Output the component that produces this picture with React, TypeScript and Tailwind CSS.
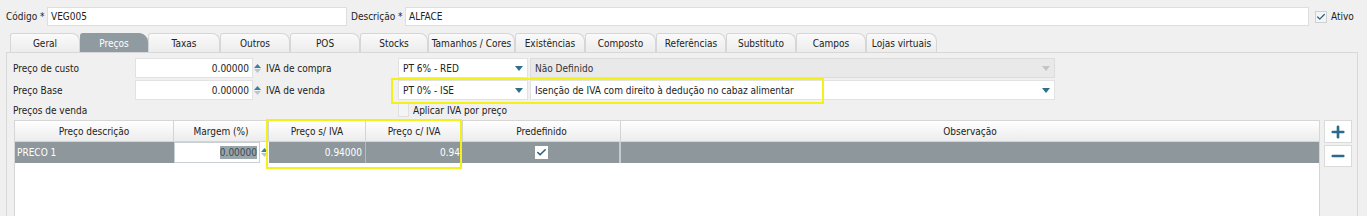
import { Check, Plus, Minus } from 'lucide-react';

const tabs = [
  { label: 'Geral', w: 70 },
  { label: 'Preços', w: 68 },
  { label: 'Taxas', w: 72 },
  { label: 'Outros', w: 70 },
  { label: 'POS', w: 70 },
  { label: 'Stocks', w: 68 },
  { label: 'Tamanhos / Cores', w: 87 },
  { label: 'Existências', w: 70 },
  { label: 'Composto', w: 71 },
  { label: 'Referências', w: 70 },
  { label: 'Substituto', w: 70 },
  { label: 'Campos', w: 70 },
  { label: 'Lojas virtuais', w: 71 },
];

function Spin() {
  return (
    <div className="flex flex-col items-center justify-center w-[9px] h-full gap-[1px]">
      <svg width="7" height="4" viewBox="0 0 7 4"><path d="M0 4 L3.5 0 L7 4 Z" fill="#3d7f9c" /></svg>
      <svg width="7" height="4" viewBox="0 0 7 4"><path d="M0 0 L3.5 4 L7 0 Z" fill="#b9c6cc" /></svg>
    </div>
  );
}

function Caret({ color = '#2f6f8c' }: { color?: string }) {
  return (
    <svg width="8" height="5" viewBox="0 0 8 5"><path d="M0 0 L8 0 L4 5 Z" fill={color} /></svg>
  );
}

export default function App() {
  return (
    <div className="relative w-[1367px] h-[216px] overflow-hidden bg-[#f0f0f0] text-[10px] text-[#222] font-['DejaVu_Sans_Condensed','DejaVu_Sans',sans-serif]">
      {/* Top row */}
      <div className="flex items-center h-[19px] mt-[7px] pl-[6px] pr-[6px]">
        <span className="w-[41px]">Código *</span>
        <div className="w-[300px] h-full bg-white border border-[#dedede] flex items-center px-[3px]">VEG005</div>
        <span className="w-[58px] pl-[4px]">Descrição *</span>
        <div className="flex-1 h-full bg-white border border-[#dedede] flex items-center px-[3px]">ALFACE</div>
        <div className="ml-[6px] w-[12px] h-[12px] border border-[#d0d0d0] bg-[#f5f5f5] flex items-center justify-center">
          <Check size={10} strokeWidth={3} color="#2d5f7e" />
        </div>
        <span className="ml-[4px] w-[30px]">Ativo</span>
      </div>

      {/* Tabs */}
      <div className="flex h-[19px] mt-[7px] pl-[10px]">
        {tabs.map((t) => {
          const active = t.label === 'Preços';
          return (
            <div
              key={t.label}
              style={{ width: t.w }}
              className={
                active
                  ? 'h-full flex items-center justify-center bg-[#8f9ba1] text-white rounded-tl-[3px] rounded-tr-[9px] border-t border-[#8f9ba1]'
                  : 'h-full flex items-center justify-center bg-gradient-to-b from-[#fafafa] to-[#ececec] border-t border-l border-r border-[#d6d6d6] rounded-tl-[3px] rounded-tr-[8px]'
              }
            >
              {t.label}
            </div>
          );
        })}
      </div>

      {/* Panel */}
      <div className="mx-[6px] mr-[9px] h-[170px] border border-[#d8d8d8] bg-[#f0f0f0] pl-[6px] pt-[5px] flex flex-col">
        {/* Row 1 */}
        <div className="flex items-center h-[20px]">
          <span className="w-[122px]">Preço de custo</span>
          <div className="w-[118px] h-full bg-white border border-[#e2e2e2] flex items-center justify-end pr-[3px]">0.00000</div>
          <Spin />
          <span className="w-[136px] pl-[4px]">IVA de compra</span>
          <div className="w-[130px] h-full bg-white border border-[#e2e2e2] flex items-center justify-between px-[4px]">
            <span>PT 6% - RED</span>
            <Caret />
          </div>
          <div className="ml-[2px] w-[525px] h-full bg-[#e9e9e9] border border-[#dcdcdc] flex items-center justify-between px-[4px] text-[#333]">
            <span>Não Definido</span>
            <Caret color="#c4c4c4" />
          </div>
        </div>
        {/* Row 2 */}
        <div className="flex items-center h-[20px] mt-[2px]">
          <span className="w-[122px]">Preço Base</span>
          <div className="w-[118px] h-full bg-white border border-[#e2e2e2] flex items-center justify-end pr-[3px]">0.00000</div>
          <Spin />
          <span className="w-[136px] pl-[4px]">IVA de venda</span>
          <div className="w-[130px] h-full bg-white border border-[#e2e2e2] flex items-center justify-between px-[4px]">
            <span>PT 0% - ISE</span>
            <Caret />
          </div>
          <div className="ml-[2px] w-[525px] h-full bg-white border border-[#e2e2e2] flex items-center justify-between px-[4px]">
            <span>Isenção de IVA com direito à dedução no cabaz alimentar</span>
            <Caret />
          </div>
        </div>
        {/* Row 3 */}
        <div className="flex items-center h-[16px] mt-[2px]">
          <span className="w-[385px]">Preços de venda</span>
          <div className="w-[11px] h-[14px] bg-[#f4f4f4] border border-[#e0e0e0]" />
          <span className="pl-[4px]">Aplicar IVA por preço</span>
        </div>

        {/* Table + buttons */}
        <div className="flex flex-1 mt-[2px]">
          <div className="w-[1306px] ml-[1px] bg-white border border-[#d6d6d6] flex flex-col">
            <div className="flex h-[21px] bg-gradient-to-b from-[#ffffff] to-[#ececec] border-b border-[#d4d4d4]">
              <div className="w-[159px] flex items-center justify-center border-r border-[#d4d4d4]">Preço descrição</div>
              <div className="w-[95px] flex items-center justify-center border-r border-[#d4d4d4]">Margem (%)</div>
              <div className="w-[97px] flex items-center justify-center border-r border-[#d4d4d4]">Preço s/ IVA</div>
              <div className="w-[97px] flex items-center justify-center border-r border-[#d4d4d4]">Preço c/ IVA</div>
              <div className="w-[158px] flex items-center justify-center border-r border-[#d4d4d4]">Predefinido</div>
              <div className="flex-1 flex items-center justify-center">Observação</div>
            </div>
            <div className="flex h-[21px] bg-[#8e979c] text-white">
              <div className="w-[159px] flex items-center pl-[2px]">PRECO 1</div>
              <div className="w-[95px] flex items-center bg-white">
                <div className="flex-1 h-full flex items-center justify-end border border-[#c9d0d4] pr-[2px]">
                  <span className="bg-[#9aa5ab] text-[#3a4a52] leading-[13px]">0.00000</span>
                </div>
                <Spin />
              </div>
              <div className="w-[97px] flex items-center justify-end pr-[3px] border-r border-[#b4bbbf]">0.94000</div>
              <div className="w-[97px] flex items-center justify-end pr-[3px]">0.94</div>
              <div className="w-[158px] flex items-center justify-center border-r-2 border-[#c5cbce]">
                <div className="w-[13px] h-[13px] bg-white flex items-center justify-center">
                  <Check size={11} strokeWidth={3.5} color="#2d5f7e" />
                </div>
              </div>
              <div className="flex-1" />
            </div>
          </div>
          <div className="flex flex-col ml-[4px] gap-[2px]">
            <div className="w-[28px] h-[23px] bg-white border border-[#dadada] flex items-center justify-center">
              <Plus size={18} strokeWidth={3.5} color="#2a6a8a" />
            </div>
            <div className="w-[28px] h-[22px] bg-white border border-[#dadada] flex items-center justify-center">
              <Minus size={18} strokeWidth={3.5} color="#2a6a8a" />
            </div>
          </div>
        </div>
      </div>

      {/* Yellow highlight overlays */}
      <div className="absolute left-[391px] top-[78px] w-[433px] h-[26px] border-2 border-[#f2f21a]" />
      <div className="absolute left-[266px] top-[119px] w-[196px] h-[50px] border-2 border-[#f2f21a]" />
    </div>
  );
}
